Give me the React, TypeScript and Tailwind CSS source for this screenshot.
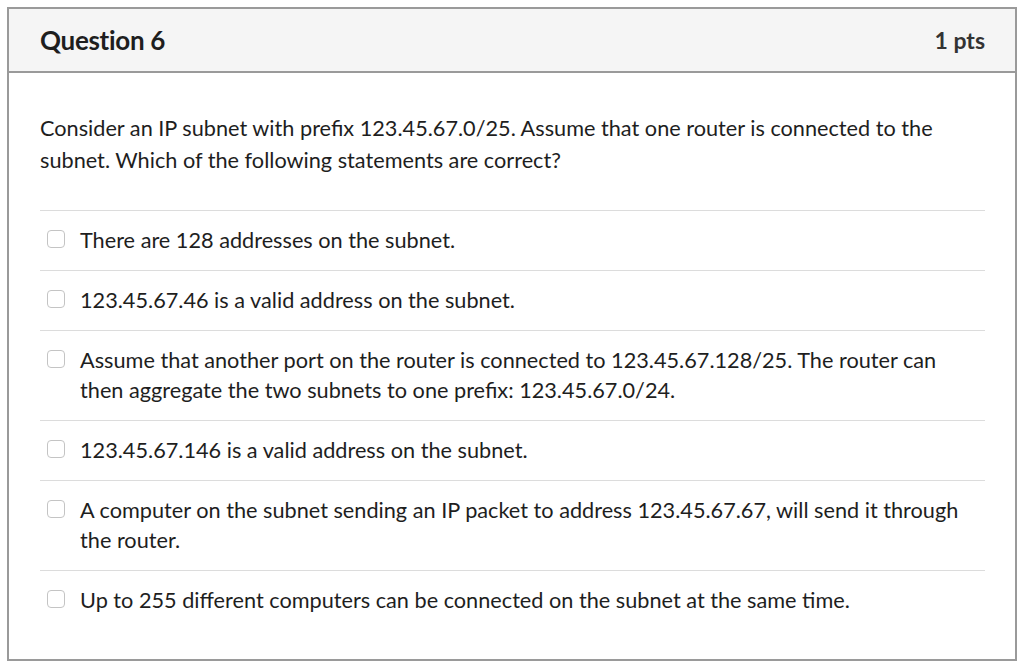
export default function App() {
  const options = [
    "There are 128 addresses on the subnet.",
    "123.45.67.46 is a valid address on the subnet.",
    "Assume that another port on the router is connected to 123.45.67.128/25. The router can then aggregate the two subnets to one prefix: 123.45.67.0/24.",
    "123.45.67.146 is a valid address on the subnet.",
    "A computer on the subnet sending an IP packet to address 123.45.67.67, will send it through the router.",
    "Up to 255 different computers can be connected on the subnet at the same time.",
  ]

  return (
    <div className="w-[1024px] h-[670px] bg-white pt-[7px] pl-[7px] font-['Lato',sans-serif] text-[#1e1e1e]">
      <div className="w-[1010px] h-[654px] border-2 border-[#9a9a9a] flex flex-col">
        {/* Header */}
        <div className="h-[64px] bg-[#f5f5f5] border-b-2 border-[#9a9a9a] flex items-center justify-between pl-[31px] pr-[30px]">
          <h2 className="text-[26px] font-bold tracking-[-0.3px]">Question 6</h2>
          <span className="text-[23px] font-bold text-[#333]">1 pts</span>
        </div>

        {/* Body */}
        <div className="pl-[31px] pr-[30px] pt-[39px]">
          <p className="text-[21.7px] leading-[32px]">
            Consider an IP subnet with prefix 123.45.67.0/25. Assume that one router is connected to the
            subnet. Which of the following statements are correct?
          </p>

          <div className="mt-[34px]">
            {options.map((opt) => (
              <label key={opt} className="flex items-start border-t border-[#dcdcdc] pt-[14px] pb-[15px] pr-[12px]">
                <span className="mt-[5px] ml-[7px] mr-[15px] w-[18px] h-[18px] shrink-0 rounded-[4px] border border-[#c4c4c4] bg-white" />
                <span className="text-[21.7px] leading-[30px]">{opt}</span>
              </label>
            ))}
          </div>
        </div>
      </div>
    </div>
  )
}
